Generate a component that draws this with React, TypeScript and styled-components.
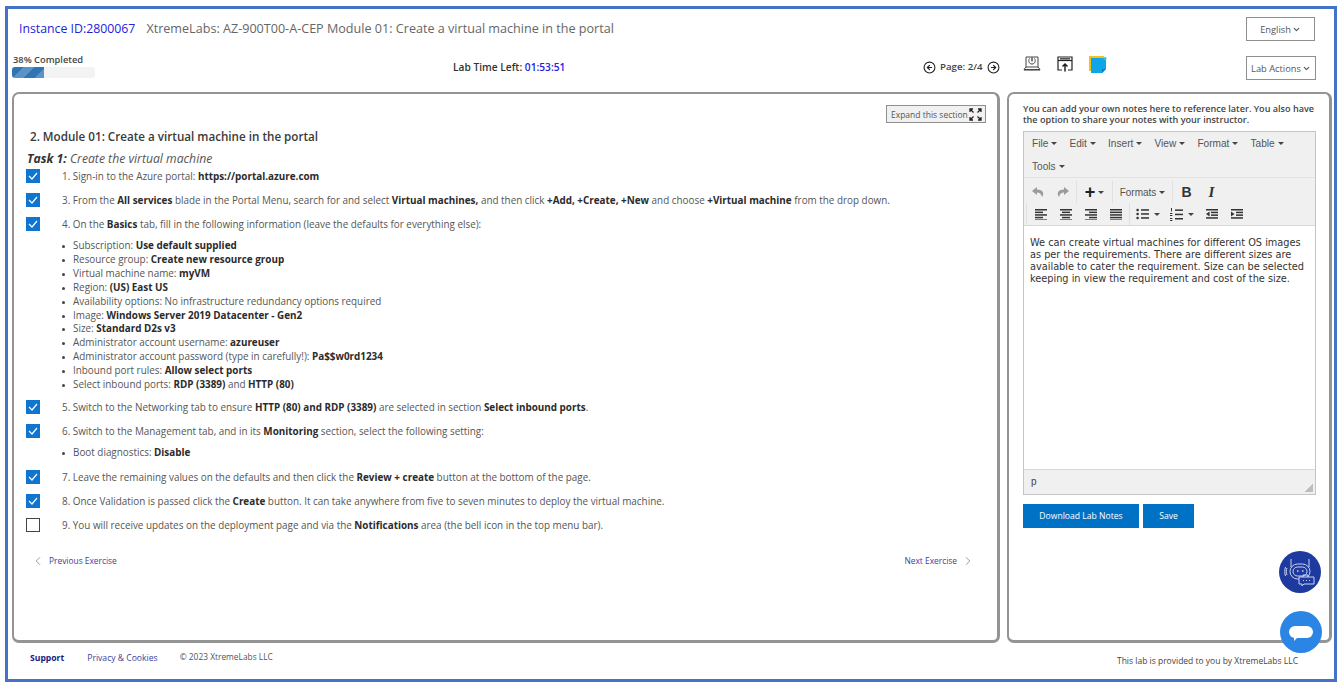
import React from "react";
import styled, { createGlobalStyle } from "styled-components";
import { ChevronDown, ChevronLeft, ChevronRight, CircleArrowLeft, CircleArrowRight } from "lucide-react";

const GlobalStyle = createGlobalStyle`
  html, body { margin: 0; padding: 0; background: #fff; }
  body { font-family: "Open Sans", "Noto Sans", sans-serif; color: #444; overflow: hidden; }
  * { box-sizing: border-box; }
  b { font-weight: 700; color: #2b2b2b; }
`;

const bars = (rows: [number, number][]) =>
  rows.map(([x, w], i) => <rect key={i} x={x} y={1 + i * 2.6} width={w} height={1.5} />);

const AlignIcon = ({ rows }: { rows: [number, number][] }) => (
  <svg width="12" height="12" viewBox="0 0 12 12" fill="#333">{bars(rows)}</svg>
);

const BulletIcon = () => (
  <svg width="13" height="12" viewBox="0 0 13 12" fill="#333">
    <circle cx="1.6" cy="2" r="1.3" /><circle cx="1.6" cy="6" r="1.3" /><circle cx="1.6" cy="10" r="1.3" />
    <rect x="5" y="1.2" width="8" height="1.5" /><rect x="5" y="5.2" width="8" height="1.5" /><rect x="5" y="9.2" width="8" height="1.5" />
  </svg>
);

const NumberIcon = () => (
  <svg width="13" height="13" viewBox="0 0 13 13" fill="#333">
    <rect x="1" y="0" width="1" height="3.4" /><rect x="0" y="5" width="2.4" height="1" /><rect x="0" y="7" width="2.4" height="1" />
    <rect x="0" y="10" width="2.4" height="1" /><rect x="0" y="12" width="2.4" height="1" />
    <rect x="5" y="1.4" width="8" height="1.5" /><rect x="5" y="5.7" width="8" height="1.5" /><rect x="5" y="10" width="8" height="1.5" />
  </svg>
);

const IndentIcon = ({ out }: { out?: boolean }) => (
  <svg width="12" height="12" viewBox="0 0 12 12" fill="#333">
    <rect y="1" width="12" height="1.5" /><rect x="5" y="3.7" width="7" height="1.5" /><rect x="5" y="6.4" width="7" height="1.5" /><rect y="9.2" width="12" height="1.5" />
    <path d={out ? "M3.6 3.4v5L0 5.9z" : "M0 3.4v5l3.6-2.5z"} />
  </svg>
);

const UndoIcon = ({ flip }: { flip?: boolean }) => (
  <svg width="12" height="11" viewBox="0 0 12 11" fill="#9b9b9b" style={flip ? { transform: "scaleX(-1)" } : undefined}>
    <path d="M5 0 0 4l5 4V5.4c2.6 0 4.2 1.2 5 4.6.9-1 1.6-2.6 1-4.4C10.200 3.300 8 2.600 5 2.600z" />
  </svg>
);

const LaptopIcon = () => (
  <svg width="18" height="15" viewBox="0 0 18 15" fill="none" stroke="#444" strokeWidth="1">
    <path d="M3 11V1h12v10" />
    <path d="M6.500 2.500c-1.500 2.500-.5 5.500 2.500 5.500s4-3 2.500-5.500" />
    <path d="M9 1.500v4" strokeWidth="1.400" />
    <path d="M3 11h12l2 2.500H1z" />
    <path d="M1 14.500h16" stroke="#999" />
  </svg>
);

const UploadWindowIcon = () => (
  <svg width="16" height="16" viewBox="0 0 16 16" fill="none" stroke="#222" strokeWidth="1.200">
    <path d="M5 14H1V1h14v13h-4" />
    <path d="M1 4.500h14" />
    <path d="M3 2.800h10" stroke="#555" strokeWidth="1.600" />
    <path d="M8 15.500V8M5.500 10.500 8 8l2.500 2.500" strokeWidth="1.500" />
  </svg>
);

const NoteIcon = () => (
  <svg width="18" height="18" viewBox="0 0 18 18">
    <rect x="0" y="0" width="15" height="15" fill="#f2c21a" />
    <path d="M2 2h15v11l-4 4H2z" fill="#0ea5e9" />
    <path d="M17 13h-4v4z" fill="#0b7fb8" />
    <circle cx="16" cy="2.500" r="1.600" fill="#35c9c9" />
  </svg>
);

const ExpandIcon = () => (
  <svg width="13" height="13" viewBox="0 0 13 13" fill="none" stroke="#222" strokeWidth="1.300">
    <path d="M1 1l3.500 3.500M1 4V1h3" />
    <path d="M12 1 8.500 4.500M9 1h3v3" />
    <path d="M1 12l3.500-3.500M1 9v3h3" />
    <path d="M12 12 8.500 8.500M12 9v3H9" />
  </svg>
);

const BotIcon = () => (
  <svg width="32" height="32" viewBox="0 0 32 32" fill="none" stroke="#c9d4f2" strokeWidth="1">
    <path d="M7 3v8M25 3v8" />
    <rect x="6" y="8" width="20" height="15" rx="7.500" />
    <rect x="9" y="11" width="14" height="9" rx="4.500" />
    <path d="M3 12c-1 2-1 5 0 7M1.500 11c-1 3-1 6 0 9" />
    <path d="M13 15h1.500M18 15h1.500" strokeWidth="1.500" />
    <path d="M15 21h15v7H20l-2 2v-2h-3z" fill="#1f3a9e" />
    <path d="M19 21v-2h5v2" />
    <path d="M19 24.500h1M22 24.500h1M25 24.500h1" />
  </svg>
);

const Frame = styled.div`
  position: relative;
  margin: 6px 1px 0 5px;
  height: 676px;
  border: 3px solid #4472c4;
  display: flex;
  flex-direction: column;
`;

const TopRow = styled.header`
  height: 38px;
  padding: 8px 19px 0 11px;
  display: flex;
  align-items: flex-start;
  justify-content: space-between;
`;

const Title = styled.h1`
  margin: 2px 0 0;
  font-size: 12.600px;
  line-height: 20px;
  font-weight: 400;
  color: #666;
  white-space: nowrap;
`;

const InstanceId = styled.span`
  font-size: 12.300px;
  color: #2222dd;
  margin-right: 11px;
`;

const OutlineButton = styled.button`
  height: 24px;
  background: #fff;
  border: 1px solid #8f8f8f;
  color: #555;
  font: 400 9.300px "Open Sans", sans-serif;
  display: flex;
  align-items: center;
  justify-content: center;
  gap: 1px;
  padding: 0;
`;

const LanguageButton = styled(OutlineButton)`
  width: 69px;
`;

const ActionsButton = styled(OutlineButton)`
  width: 70px;
  margin-top: 3px;
`;

const StatusRow = styled.div`
  height: 45px;
  padding: 6px 18px 0 4px;
  display: grid;
  grid-template-columns: 441px 461px 109px 1fr auto;
  align-items: start;
`;

const Progress = styled.div`
  padding-left: 1px;
  font-size: 9.300px;
  font-weight: 600;
  line-height: 14px;
  color: #444;
`;

const Track = styled.div`
  width: 83px;
  height: 11px;
  margin-left: -1px;
  border-radius: 3px;
  background: #f3f3f3;
  overflow: hidden;
`;

const Fill = styled.div`
  height: 100%;
  background: repeating-linear-gradient(135deg, #2e75b6 0 8px, #5b93c7 8px 16px);
`;

const TimeLeft = styled.div`
  margin-top: 6px;
  font-size: 10.200px;
  line-height: 16px;
  font-weight: 600;
  color: #333;
  white-space: nowrap;
`;

const Clock = styled.span`
  color: #2222dd;
`;

const Pager = styled.div`
  margin-top: 6px;
  display: flex;
  align-items: center;
  gap: 4px;
  font-size: 9.700px;
  line-height: 16px;
  font-weight: 600;
  color: #444;
  padding-left: 9px;
`;

const ToolIcons = styled.div`
  display: flex;
  align-items: flex-start;
  gap: 16px;
  padding-top: 3px;
`;

const Panels = styled.main`
  height: 551px;
  padding: 0 2px 0 4px;
  display: flex;
  gap: 7px;
`;

const Panel = styled.section<{ $width: number }>`
  flex: none;
  width: ${(p) => p.$width}px;
  height: 100%;
  border-style: solid;
  border-color: #949494;
  border-width: 2px 3px 3px 2px;
  border-radius: 7px;
  background: #fff;
`;

const ExerciseBody = styled.div`
  padding: 11px 11px 0 13px;
`;

const ExpandRow = styled.div`
  display: flex;
  justify-content: flex-end;
`;

const ExpandButton = styled.button`
  width: 100px;
  height: 18px;
  border: 1px solid #8f8f8f;
  background: #f1f1f1;
  color: #555;
  padding: 0 0 0 4px;
  font: 400 8.500px "Open Sans", sans-serif;
  display: flex;
  align-items: center;
  gap: 1px;
  white-space: nowrap;
`;

const Heading = styled.h2`
  margin: 6px 0 0 3px;
  font-size: 11.650px;
  line-height: 16px;
  font-weight: 600;
  color: #3a3a3a;
`;

const TaskTitle = styled.h3`
  margin: 6px 0 0 0;
  font-size: 12.200px;
  line-height: 15px;
  font-weight: 400;
  font-style: italic;
  color: #555;

  b {
    color: #333;
  }
`;

const StepList = styled.div`
  margin: 1px 0 0 -1px;
`;

const Step = styled.div`
  display: grid;
  grid-template-columns: 14px 1fr;
  column-gap: 22px;
  min-height: 24px;
  align-items: start;
`;

const StepText = styled.div`
  font-size: 9.900px;
  line-height: 18px;
  color: #555;
  white-space: nowrap;
`;

const Check = styled.span<{ $on?: boolean }>`
  width: 14px;
  height: 14px;
  margin-top: 2px;
  display: flex;
  align-items: center;
  justify-content: center;
  background: ${(p) => (p.$on ? "#0f75cf" : "#fff")};
  border: ${(p) => (p.$on ? "none" : "1px solid #444")};
`;

const SubList = styled.ul<{ $after: number }>`
  margin: 0 0 ${(p) => p.$after}px 47px;
  padding: 0;
  list-style: none;
  font-size: 9.900px;
  line-height: 13.900px;
  color: #555;

  li {
    position: relative;
    white-space: nowrap;
  }

  li::before {
    content: "";
    position: absolute;
    left: -11px;
    top: 6px;
    width: 3px;
    height: 3px;
    border-radius: 50%;
    background: #444;
  }
`;

const ExerciseNav = styled.nav`
  margin: 14px 11px 0 4px;
  display: flex;
  justify-content: space-between;
`;

const NavLink = styled.a`
  display: flex;
  align-items: center;
  gap: 4px;
  font-size: 8.400px;
  line-height: 14px;
  color: #3d3d9e;
`;

const NotesBody = styled.div`
  padding: 9px 14px 0 14px;
`;

const NotesHint = styled.p`
  margin: 0;
  font-size: 9.100px;
  line-height: 11px;
  font-weight: 600;
  color: #444;
`;

const Editor = styled.div`
  width: 293px;
  height: 364px;
  margin-top: 6px;
  border: 1px solid #c5c5c5;
  display: flex;
  flex-direction: column;
  font-family: "Liberation Sans", sans-serif;
`;

const MenuBar = styled.div`
  height: 46px;
  padding: 0 0 0 4px;
  background: #f0f0f0;
  border-bottom: 1px solid #e2e2e2;
  display: flex;
  flex-wrap: wrap;
  align-content: flex-start;
`;

const MenuItem = styled.span`
  height: 23px;
  padding: 0 5px 0 4px;
  margin-right: 3.200px;
  display: flex;
  align-items: center;
  font-size: 10.100px;
  color: #555;
`;

const Caret = styled.i<{ $gap?: number }>`
  display: inline-block;
  margin-left: ${(p) => p.$gap ?? 3}px;
  border-top: 3px solid #444;
  border-left: 3px solid transparent;
  border-right: 3px solid transparent;
`;

const Toolbar = styled.div`
  height: 48px;
  background: #f0f0f0;
  border-bottom: 1px solid #d9d9d9;
  padding: 3px 0 0 0;
`;

const ToolRow = styled.div`
  height: 22px;
  display: flex;
  align-items: center;
`;

const LowerToolRow = styled(ToolRow)`
  margin-left: 2px;
  border-left: 1px solid #e0e0e0;
`;

const ToolGroup = styled.div`
  height: 22px;
  display: flex;
  align-items: center;
  border-right: 1px solid #e0e0e0;
  padding: 0 1px;

  &:last-child {
    border-right: none;
  }
`;

const ToolButton = styled.span<{ $wide?: number }>`
  width: ${(p) => p.$wide ?? 25}px;
  height: 22px;
  display: flex;
  align-items: center;
  justify-content: center;
  color: #555;
  font-size: 10px;
`;

const Plus = styled.span`
  font: 700 18px/18px "Liberation Sans", sans-serif;
  color: #222;
`;

const BoldGlyph = styled.span`
  font: 700 14px "Liberation Sans", sans-serif;
  color: #333;
`;

const ItalicGlyph = styled.span`
  font: italic 700 15px "Liberation Serif", serif;
  color: #333;
`;

const Content = styled.div`
  flex: 1;
  padding: 11px 6px 0;
  font-family: "DejaVu Sans", Verdana, sans-serif;
  font-size: 9.750px;
  line-height: 11.900px;
  color: #333;
  background: #fff;
`;

const StatusBar = styled.div`
  position: relative;
  height: 25px;
  padding: 0 0 0 7px;
  background: #f0f0f0;
  border-top: 1px solid #d9d9d9;
  font: 400 10px/24px "Liberation Sans", sans-serif;
  color: #444;
`;

const ResizeGrip = styled.span`
  position: absolute;
  right: 2px;
  bottom: 2px;
  width: 8px;
  height: 8px;
  background: linear-gradient(135deg, transparent 50%, #bdbdbd 50%);
`;

const ActionRow = styled.div`
  margin-top: 9px;
  display: flex;
  gap: 4px;
`;

const PrimaryButton = styled.button<{ $width: number }>`
  width: ${(p) => p.$width}px;
  height: 24px;
  border: none;
  padding: 0;
  background: #0072c6;
  color: #fff;
  font: 400 8.600px "Open Sans", sans-serif;
`;

const Footer = styled.footer`
  flex: 1;
  padding: 8px 36px 0 22px;
  display: flex;
  font-size: 8.600px;
  color: #555;
`;

const Support = styled.a`
  font-weight: 700;
  color: #1a1a80;
  line-height: 14px;
  margin-right: 23px;
`;

const Privacy = styled.a`
  color: #3d3d9e;
  line-height: 14px;
  margin-right: 22px;
`;

const Copyright = styled.span`
  font-size: 8.400px;
  line-height: 12px;
`;

const ProvidedBy = styled.span`
  margin-left: auto;
  margin-top: 3px;
  font-size: 8.500px;
  line-height: 14px;
  color: #444;
`;

const Fab = styled.div<{ $bg: string; $right: number; $bottom: number }>`
  position: absolute;
  right: ${(p) => p.$right}px;
  bottom: ${(p) => p.$bottom}px;
  width: 42px;
  height: 42px;
  border-radius: 50%;
  background: ${(p) => p.$bg};
  display: flex;
  align-items: center;
  justify-content: center;
`;

const ChatBubble = styled.span`
  position: relative;
  width: 24px;
  height: 12px;
  border-radius: 6px;
  background: #fff;

  &::after {
    content: "";
    position: absolute;
    left: 5px;
    top: 11px;
    border-top: 4px solid #fff;
    border-right: 4px solid transparent;
  }
`;

const CheckMark = () => (
  <svg width="10" height="8" viewBox="0 0 10 8" fill="none" stroke="#fff" strokeWidth="1.200">
    <path d="M1 4l3 3 5-6" />
  </svg>
);

const subs: React.ReactNode[] = [
  <>Subscription: <b>Use default supplied</b></>,
  <>Resource group: <b>Create new resource group</b></>,
  <>Virtual machine name: <b>myVM</b></>,
  <>Region: <b>(US) East US</b></>,
  <>Availability options: No infrastructure redundancy options required</>,
  <>Image: <b>Windows Server 2019 Datacenter - Gen2</b></>,
  <>Size: <b>Standard D2s v3</b></>,
  <>Administrator account username: <b>azureuser</b></>,
  <>Administrator account password (type in carefully!): <b>Pa$$w0rd1234</b></>,
  <>Inbound port rules: <b>Allow select ports</b></>,
  <>Select inbound ports: <b>RDP (3389)</b> and <b>HTTP (80)</b></>,
];

const menus = ["File", "Edit", "Insert", "View", "Format", "Table", "Tools"];

const App = () => (
  <>
    <GlobalStyle />
    <Frame>
      <TopRow>
        <Title>
          <InstanceId>Instance ID:2800067</InstanceId>
          XtremeLabs: AZ-900T00-A-CEP Module 01: Create a virtual machine in the portal
        </Title>
        <LanguageButton>English <ChevronDown size={9} strokeWidth={3} /></LanguageButton>
      </TopRow>
      <StatusRow>
        <Progress>
          38% Completed
          <Track><Fill style={{ width: "38%" }} /></Track>
        </Progress>
        <TimeLeft>Lab Time Left: <Clock>01:53:51</Clock></TimeLeft>
        <Pager>
          <CircleArrowLeft size={13} color="#222" />
          Page: 2/4
          <CircleArrowRight size={13} color="#222" />
        </Pager>
        <ToolIcons>
          <LaptopIcon />
          <UploadWindowIcon />
          <NoteIcon />
        </ToolIcons>
        <ActionsButton>Lab Actions <ChevronDown size={9} strokeWidth={3} /></ActionsButton>
      </StatusRow>
      <Panels>
        <Panel $width={988}>
          <ExerciseBody>
            <ExpandRow>
              <ExpandButton>Expand this section<ExpandIcon /></ExpandButton>
            </ExpandRow>
            <Heading>2. Module 01: Create a virtual machine in the portal</Heading>
            <TaskTitle><b>Task 1:</b> Create the virtual machine</TaskTitle>
            <StepList>
              <Step><Check $on><CheckMark /></Check><StepText>1. Sign-in to the Azure portal: <b>https://portal.azure.com</b></StepText></Step>
              <Step><Check $on><CheckMark /></Check><StepText>3. From the <b>All services</b> blade in the Portal Menu, search for and select <b>Virtual machines,</b> and then click <b>+Add, +Create, +New</b> and choose <b>+Virtual machine</b> from the drop down.</StepText></Step>
              <Step><Check $on><CheckMark /></Check><StepText>4. On the <b>Basics</b> tab, fill in the following information (leave the defaults for everything else):</StepText></Step>
              <SubList $after={6.5}>{subs.map((s, i) => <li key={i}>{s}</li>)}</SubList>
              <Step><Check $on><CheckMark /></Check><StepText>5. Switch to the Networking tab to ensure <b>HTTP (80) and RDP (3389)</b> are selected in section <b>Select inbound ports</b>.</StepText></Step>
              <Step><Check $on><CheckMark /></Check><StepText>6. Switch to the Management tab, and in its <b>Monitoring</b> section, select the following setting:</StepText></Step>
              <SubList $after={7.5}><li>Boot diagnostics: <b>Disable</b></li></SubList>
              <Step><Check $on><CheckMark /></Check><StepText>7. Leave the remaining values on the defaults and then click the <b>Review + create</b> button at the bottom of the page.</StepText></Step>
              <Step><Check $on><CheckMark /></Check><StepText>8. Once Validation is passed click the <b>Create</b> button. It can take anywhere from five to seven minutes to deploy the virtual machine.</StepText></Step>
              <Step><Check /><StepText>9. You will receive updates on the deployment page and via the <b>Notifications</b> area (the bell icon in the top menu bar).</StepText></Step>
            </StepList>
            <ExerciseNav>
              <NavLink><ChevronLeft size={14} strokeWidth={1} color="#555" />Previous Exercise</NavLink>
              <NavLink>Next Exercise<ChevronRight size={14} strokeWidth={1} color="#555" /></NavLink>
            </ExerciseNav>
          </ExerciseBody>
        </Panel>
        <Panel $width={325}>
          <NotesBody>
            <NotesHint>You can add your own notes here to reference later. You also have the option to share your notes with your instructor.</NotesHint>
            <Editor>
              <MenuBar>
                {menus.map((m) => <MenuItem key={m}>{m}<Caret /></MenuItem>)}
              </MenuBar>
              <Toolbar>
                <ToolRow>
                  <ToolGroup>
                    <ToolButton><UndoIcon /></ToolButton>
                    <ToolButton><UndoIcon flip /></ToolButton>
                  </ToolGroup>
                  <ToolGroup>
                    <ToolButton $wide={33}><Plus>+</Plus><Caret /></ToolButton>
                  </ToolGroup>
                  <ToolGroup>
                    <ToolButton $wide={57}>Formats<Caret /></ToolButton>
                  </ToolGroup>
                  <ToolGroup>
                    <ToolButton><BoldGlyph>B</BoldGlyph></ToolButton>
                    <ToolButton><ItalicGlyph>I</ItalicGlyph></ToolButton>
                  </ToolGroup>
                </ToolRow>
                <LowerToolRow>
                  <ToolGroup>
                    <ToolButton><AlignIcon rows={[[0, 12], [0, 8], [0, 12], [0, 8], [0, 12]]} /></ToolButton>
                    <ToolButton><AlignIcon rows={[[0, 12], [2, 8], [0, 12], [2, 8], [0, 12]]} /></ToolButton>
                    <ToolButton><AlignIcon rows={[[0, 12], [4, 8], [0, 12], [4, 8], [0, 12]]} /></ToolButton>
                    <ToolButton><AlignIcon rows={[[0, 12], [0, 12], [0, 12], [0, 12], [0, 12]]} /></ToolButton>
                  </ToolGroup>
                  <ToolGroup>
                    <ToolButton $wide={34}><BulletIcon /><Caret $gap={5} /></ToolButton>
                    <ToolButton $wide={34}><NumberIcon /><Caret $gap={5} /></ToolButton>
                    <ToolButton><IndentIcon out /></ToolButton>
                    <ToolButton><IndentIcon /></ToolButton>
                  </ToolGroup>
                </LowerToolRow>
              </Toolbar>
              <Content>We can create virtual machines for different OS images as per the requirements. There are different sizes are available to cater the requirement. Size can be selected keeping in view the requirement and cost of the size.</Content>
              <StatusBar>p<ResizeGrip /></StatusBar>
            </Editor>
            <ActionRow>
              <PrimaryButton $width={116}>Download Lab Notes</PrimaryButton>
              <PrimaryButton $width={51}>Save</PrimaryButton>
            </ActionRow>
          </NotesBody>
        </Panel>
      </Panels>
      <Footer>
        <Support>Support</Support>
        <Privacy>Privacy &amp; Cookies</Privacy>
        <Copyright>© 2023 XtremeLabs LLC</Copyright>
        <ProvidedBy>This lab is provided to you by XtremeLabs LLC</ProvidedBy>
      </Footer>
      <Fab $bg="#1f3a9e" $right={13} $bottom={86}><BotIcon /></Fab>
      <Fab $bg="#2b85e4" $right={12} $bottom={26}><ChatBubble /></Fab>
    </Frame>
  </>
);

export default App;
